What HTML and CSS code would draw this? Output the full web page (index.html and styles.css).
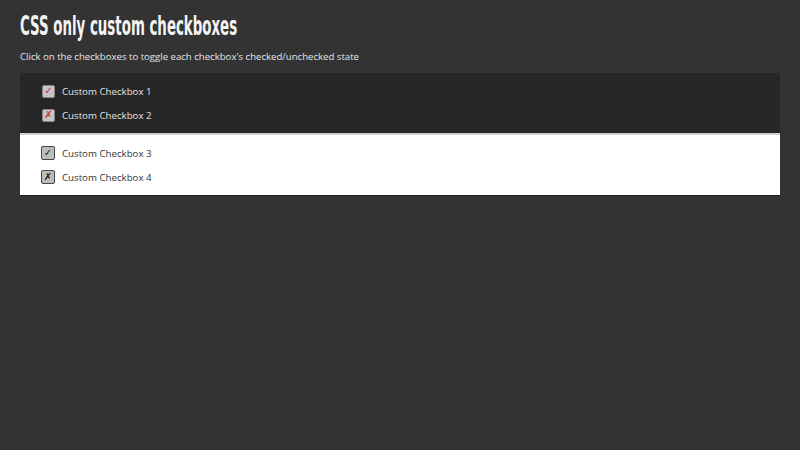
FILE: index.html
```html
<!DOCTYPE html>
<html>
<head>
<meta charset="utf-8">
<link rel="stylesheet" href="styles.css">
</head>
<body>
<h1 class="title"><span class="title-text">CSS only custom checkboxes</span></h1>
<p class="intro">Click on the checkboxes to toggle each checkbox's checked/unchecked state</p>
<div class="panel panel-dark">
  <label class="row"><span class="box box-dark tick">✓</span>Custom Checkbox 1</label>
  <label class="row"><span class="box box-dark cross">✗</span>Custom Checkbox 2</label>
</div>
<div class="panel panel-light">
  <label class="row"><span class="box box-light">✓</span>Custom Checkbox 3</label>
  <label class="row"><span class="box box-light">✗</span>Custom Checkbox 4</label>
</div>
</body>
</html>
```
FILE: styles.css
```css
html, body {
  margin: 0;
  padding: 0;
  background: #333333;
}
body {
  padding: 11px 20px;
  font-family: "Open Sans", "DejaVu Sans", sans-serif;
  color: #e8e8e8;
}
.title {
  margin: 0;
  font-family: "DejaVu Sans Condensed", "DejaVu Sans", sans-serif;
  font-weight: bold;
  font-size: 27px;
  line-height: 30px;
  color: #f4f4f4;
  white-space: nowrap;
}
.title-text {
  display: inline-block;
  transform: scaleX(0.55);
  transform-origin: left center;
}
.intro {
  margin: 9px 0 9px;
  font-size: 9.6px;
  line-height: 14px;
  color: #e6e6e6;
}
.panel {
  display: flex;
  flex-direction: column;
  gap: 8px;
  padding: 10px 22px;
}
.panel-dark {
  background: #262626;
}
.panel-light {
  background: #ffffff;
  border-top: 2px solid #cfcfcf;
  padding-top: 10px;
  padding-bottom: 10px;
  box-shadow: 0 1px 0 #222;
}
.row {
  display: flex;
  align-items: center;
  gap: 7px;
  height: 16px;
  font-size: 9.7px;
}
.panel-dark .row { color: #e4e4e4; }
.panel-light .row { color: #333; }
.box {
  width: 11px;
  height: 11px;
  border-radius: 2px;
  display: flex;
  align-items: center;
  justify-content: center;
  font-size: 10px;
  line-height: 1;
  font-family: "DejaVu Sans", sans-serif;
}
.box-dark {
  background: #c9c3c4;
  border: 1px solid #8a8586;
  color: #c0303a;
}
.box-light {
  width: 12px;
  height: 12px;
  background: #bdbdbd;
  border: 1px solid #444;
  color: #222;
  margin-left: -1px;
  font-weight: normal;
}
```
